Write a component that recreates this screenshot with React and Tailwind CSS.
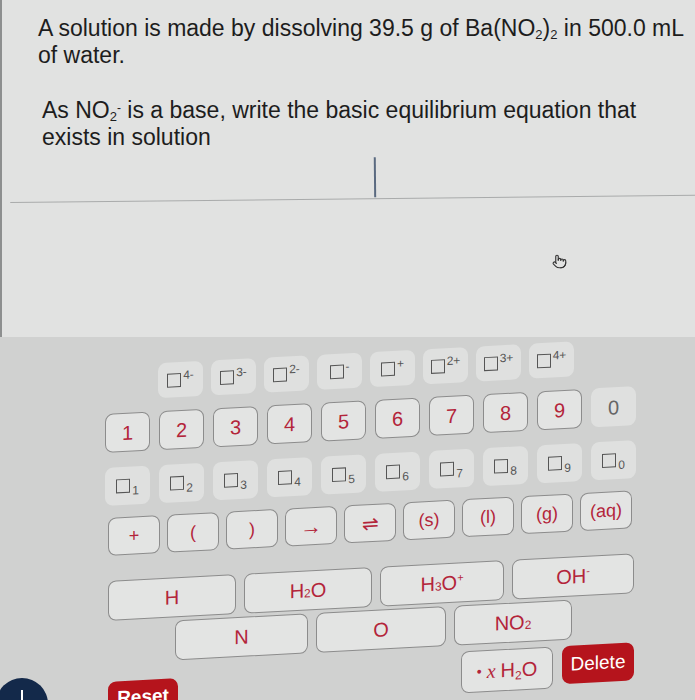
import { Pointer } from 'lucide-react';

const red = 'text-[#b3243a]';

function Box({ size = 'w-[14px] h-[14px]' }) {
  return <span className={`inline-block ${size} border border-[#555] bg-transparent`} />;
}

function ChargeKey({ label }) {
  return (
    <div className="w-[45px] h-[35px] rounded-lg bg-[#dfe0df] flex items-center justify-center text-[#555]">
      <Box />
      <span className="text-[12px] -mt-[10px] ml-[2px]">{label}</span>
    </div>
  );
}

function DigitKey({ label }) {
  return (
    <div className={`w-[45px] h-[39px] rounded-lg bg-[#e3e4e3] border border-[#8c8c8c] flex items-center justify-center text-[20px] ${red}`}>
      {label}
    </div>
  );
}

function SubKey({ label }) {
  return (
    <div className="w-[45px] h-[38px] rounded-lg bg-[#dfe0df] flex items-center justify-center text-[#555]">
      <Box size="w-[14px] h-[14px]" />
      <span className="text-[12px] mt-[10px] ml-[2px]">{label}</span>
    </div>
  );
}

function SymKey({ children, className = 'text-[18px]' }) {
  return (
    <div className={`w-[52px] h-[38px] rounded-lg bg-[#e3e4e3] border border-[#8c8c8c] flex items-center justify-center ${className} ${red}`}>
      {children}
    </div>
  );
}

function WideKey({ children, className = 'w-[125px]' }) {
  return (
    <div className={`${className} h-[40px] rounded-lg bg-[#e3e4e3] border border-[#8c8c8c] flex items-center justify-center text-[20px] ${red}`}>
      {children}
    </div>
  );
}

export default function App() {
  const charges = ['4-', '3-', '2-', '-', '+', '2+', '3+', '4+'];
  const digits = ['1', '2', '3', '4', '5', '6', '7', '8', '9'];
  const subs = ['1', '2', '3', '4', '5', '6', '7', '8', '9', '0'];

  return (
    <div className="w-[695px] h-[700px] overflow-hidden relative bg-[#dedfde] font-['Liberation_Sans',Arial,sans-serif]">
      {/* question */}
      <div className="h-[337px] border-l-2 border-[#8d8f8f] bg-[#e1e2e1]">
        <div className="pl-[36px] pr-[8px] pt-[15px] text-[23px] leading-[27px] text-[#1d1d1d]">
          <p>
            A solution is made by dissolving 39.5 g of Ba(NO<sub className="text-[13px]">2</sub>)
            <sub className="text-[13px]">2</sub> in 500.0 mL of water.
          </p>
          <p className="mt-[28px] pl-[4px]">
            As NO<sub className="text-[13px]">2</sub>
            <sup className="text-[12px]">-</sup> is a base, write the basic equilibrium equation that exists in
            solution
          </p>
        </div>
        <div className="relative mt-[8px] ml-[8px] h-[44px] border-b border-[#a9abab] -rotate-[0.6deg] origin-left">
          <div className="absolute left-[364px] top-[2px] w-[2px] h-[40px] bg-[#5a6a80]" />
        </div>
        <Pointer className="absolute left-[552px] top-[254px] text-[#333]" size={15} strokeWidth={1.8} />
      </div>

      {/* keypad */}
      <div className="bg-[#d0d1d0] h-[363px] pt-[29px]">
        <div className="ml-[105px] -skew-y-3 origin-top-left flex flex-col">
          <div className="flex gap-[8px] ml-[53px]">
            {charges.map((c) => (
              <ChargeKey key={c} label={c} />
            ))}
          </div>
          <div className="flex gap-[9px] mt-[13px]">
            {digits.map((d) => (
              <DigitKey key={d} label={d} />
            ))}
            <div className="w-[45px] h-[39px] rounded-lg bg-[#dfe0df] flex items-center justify-center text-[20px] text-[#666]">
              0
            </div>
          </div>
          <div className="flex gap-[9px] mt-[15px]">
            {subs.map((s) => (
              <SubKey key={s} label={s} />
            ))}
          </div>
          <div className="flex gap-[7px] mt-[12px] ml-[3px]">
            <SymKey>+</SymKey>
            <SymKey>(</SymKey>
            <SymKey>)</SymKey>
            <SymKey className="text-[22px]">→</SymKey>
            <SymKey className="text-[20px]">⇌</SymKey>
            <SymKey>(s)</SymKey>
            <SymKey>(l)</SymKey>
            <SymKey>(g)</SymKey>
            <SymKey>(aq)</SymKey>
          </div>
          <div className="flex gap-[8px] mt-[25px] ml-[3px]">
            <WideKey className="w-[128px]">H</WideKey>
            <WideKey className="w-[128px]">
              H<sub className="text-[12px]">2</sub>O
            </WideKey>
            <WideKey className="w-[124px]">
              H<sub className="text-[12px]">3</sub>O<sup className="text-[11px]">+</sup>
            </WideKey>
            <WideKey className="w-[122px]">
              OH<sup className="text-[11px]">-</sup>
            </WideKey>
          </div>
          <div className="flex gap-[8px] mt-[3px] ml-[70px]">
            <WideKey className="w-[133px]">N</WideKey>
            <WideKey className="w-[130px]">O</WideKey>
            <WideKey className="w-[118px]">
              NO<sub className="text-[12px]">2</sub>
            </WideKey>
          </div>
          <div className="flex items-start mt-[6px]">
            <div className="mt-[12px] ml-[3px] w-[70px] h-[34px] rounded-lg bg-[#b5141c] text-white text-[19px] font-bold flex items-start justify-center pt-[3px]">
              Reset
            </div>
            <div className={`ml-[283px] w-[92px] h-[42px] rounded-lg bg-[#e3e4e3] border border-[#8c8c8c] flex items-center justify-center gap-[5px] text-[20px] ${red}`}>
              <span className="text-[14px]">•</span>
              <span className="italic font-['Liberation_Serif',serif]">x</span>
              <span>
                H<sub className="text-[12px]">2</sub>O
              </span>
            </div>
            <div className="ml-[9px] w-[72px] h-[38px] rounded-lg bg-[#b5141c] text-white text-[19px] flex items-center justify-center">
              Delete
            </div>
          </div>
        </div>
      </div>

      <div className="absolute left-[-4px] top-[678px] w-[52px] h-[52px] rounded-full bg-[#13294a] flex justify-center pt-[12px]">
        <div className="w-[2px] h-[10px] bg-white" />
      </div>
    </div>
  );
}
